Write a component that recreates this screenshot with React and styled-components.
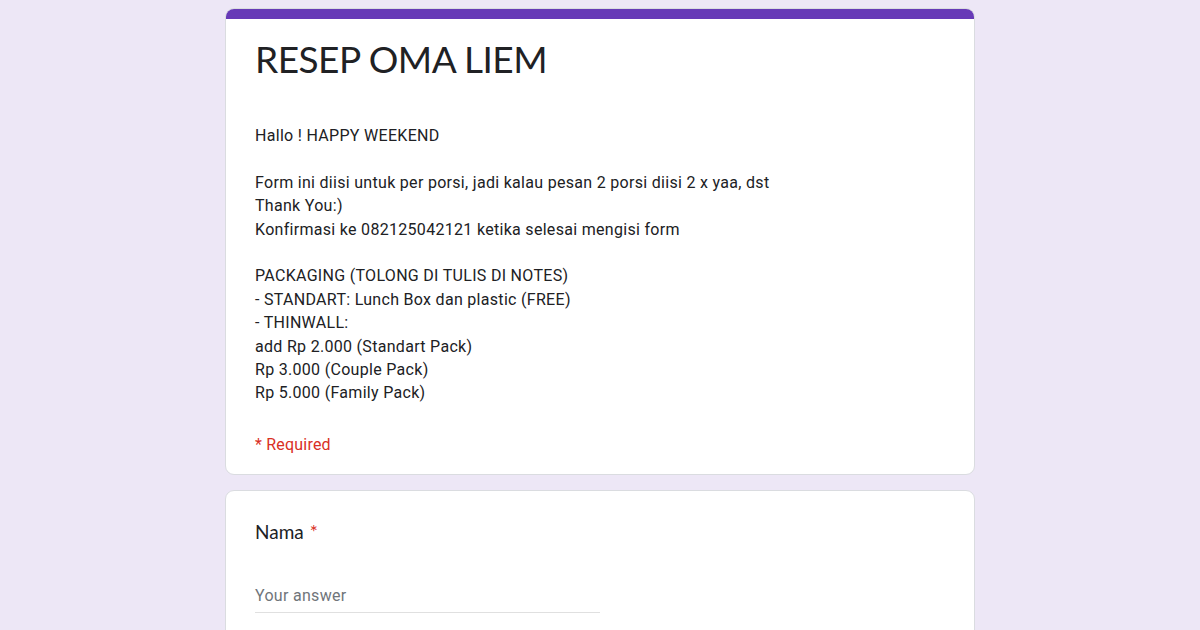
import React from 'react';
import styled, { createGlobalStyle } from 'styled-components';

const GlobalStyle = createGlobalStyle`
  html, body {
    margin: 0;
    padding: 0;
    background: #ede7f6;
  }
  body {
    font-family: Roboto, "Liberation Sans", Arial, sans-serif;
    color: #202124;
  }
`;

const Page = styled.div`
  width: 1200px;
  height: 630px;
  overflow: hidden;
  display: flex;
  flex-direction: column;
  align-items: center;
  padding-top: 8px;
  gap: 15px;
  box-sizing: border-box;
`;

const Card = styled.div`
  width: 750px;
  box-sizing: border-box;
  background: #fff;
  border: 1px solid #dadce0;
  border-radius: 9px;
  overflow: hidden;
  flex-shrink: 0;
`;

const TopBar = styled.div`
  height: 11px;
  background: #673ab7;
  margin: -1px -1px 0;
`;

const Header = styled.div`
  padding: 16px 29px 17px;
`;

const Title = styled.h1`
  margin: 0;
  font-family: Lato, "Open Sans", sans-serif;
  font-weight: 400;
  font-size: 37px;
  line-height: 48px;
  letter-spacing: -0.5px;
  color: #202124;
`;

const Description = styled.div`
  margin-top: 41px;
  font-size: 16px;
  line-height: 23.4px;
  letter-spacing: 0.3px;
  white-space: pre-wrap;
  color: #202124;
`;

const RequiredNote = styled.div`
  margin-top: 28px;
  font-size: 16px;
  line-height: 24px;
  letter-spacing: 0.2px;
  color: #d93025;
`;

const Question = styled.div`
  padding: 27px 29px 40px;
`;

const Label = styled.div`
  font-family: Lato, "Open Sans", sans-serif;
  font-size: 19px;
  line-height: 28px;
  color: #202124;
`;

const Star = styled.span`
  color: #d93025;
  margin-left: 6px;
`;

const Answer = styled.div`
  margin-top: 39px;
  width: 345px;
  padding-bottom: 5px;
  border-bottom: 1px solid #e0e0e0;
  font-size: 16px;
  line-height: 22px;
  color: #70757a;
  letter-spacing: 0.3px;
`;

const description = `Hallo ! HAPPY WEEKEND

Form ini diisi untuk per porsi, jadi kalau pesan 2 porsi diisi 2 x yaa, dst
Thank You:)
Konfirmasi ke 082125042121 ketika selesai mengisi form

PACKAGING (TOLONG DI TULIS DI NOTES)
- STANDART: Lunch Box dan plastic (FREE)
- THINWALL:
add Rp 2.000 (Standart Pack)
Rp 3.000 (Couple Pack)
Rp 5.000 (Family Pack)`;

export default function App() {
  return (
    <>
      <GlobalStyle />
      <Page>
        <Card>
          <TopBar />
          <Header>
            <Title>RESEP OMA LIEM</Title>
            <Description>{description}</Description>
            <RequiredNote>* Required</RequiredNote>
          </Header>
        </Card>
        <Card>
          <Question>
            <Label>
              Nama<Star>*</Star>
            </Label>
            <Answer>Your answer</Answer>
          </Question>
        </Card>
      </Page>
    </>
  );
}
